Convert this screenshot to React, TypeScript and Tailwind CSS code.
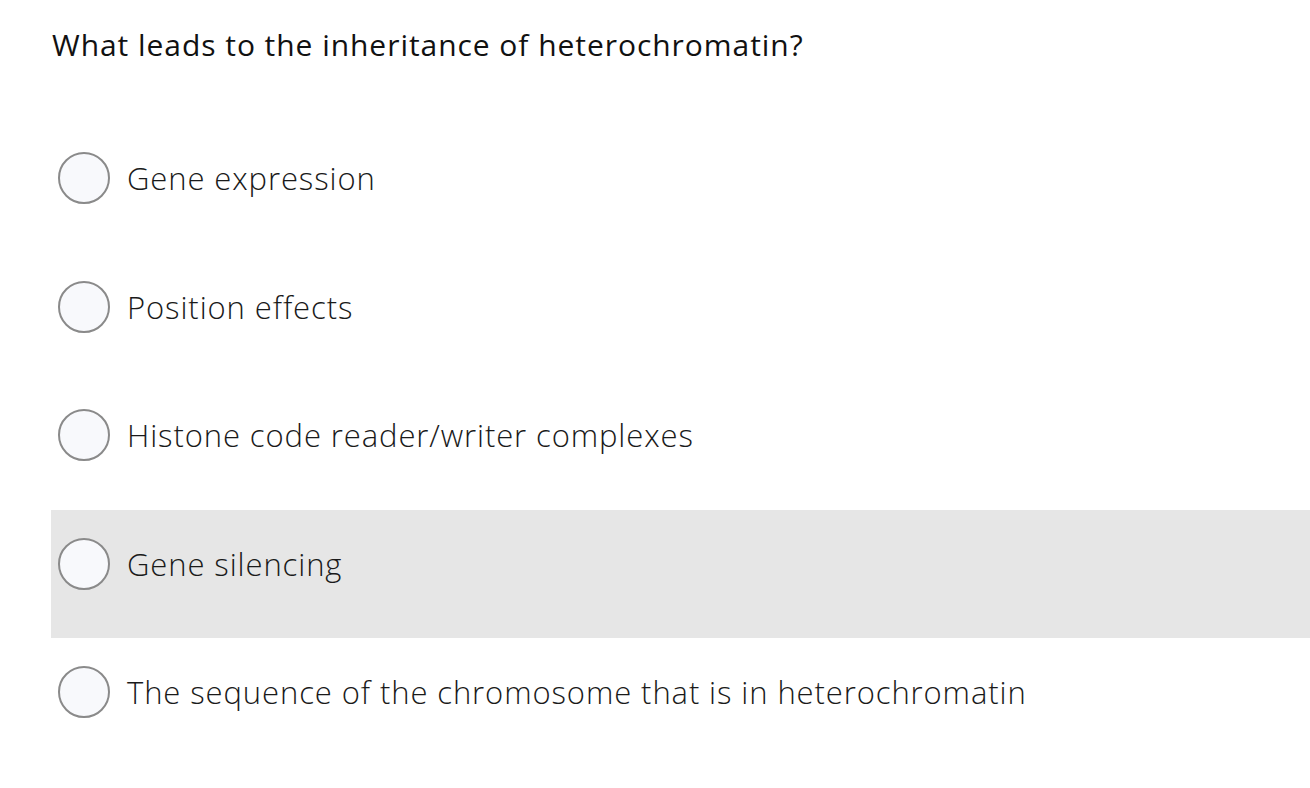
import React from "react";

const options = [
  "Gene expression",
  "Position effects",
  "Histone code reader/writer complexes",
  "Gene silencing",
  "The sequence of the chromosome that is in heterochromatin",
];

export default function App() {
  return (
    <div className="w-[1310px] h-[788px] bg-white overflow-hidden" style={{ fontFamily: '"Open Sans", "Noto Sans", sans-serif' }}>
      <div className="pl-[52px] pt-[24px] h-[124px]">
        <h1 className="text-[30px] leading-[42px] tracking-[0.95px] text-[#111] font-normal">What leads to the inheritance of heterochromatin?</h1>
      </div>
      <div className="pl-[51px]">
        {options.map((o, i) => (
          <div
            key={i}
            className={`h-[128.5px] flex items-start pl-[7px] pt-[28px] ${i === 3 ? "bg-[#e6e6e6]" : ""}`}
          >
            <div className="flex items-center gap-[17px] h-[52px]">
              <span className="w-[52px] h-[52px] rounded-full border-2 border-[#8a8a8a] bg-[#f8f9fc] shrink-0" />
              <span className="text-[31px] font-light tracking-[0.9px] text-[#1a1a1a] leading-[42px]">{o}</span>
            </div>
          </div>
        ))}
      </div>
    </div>
  );
}
